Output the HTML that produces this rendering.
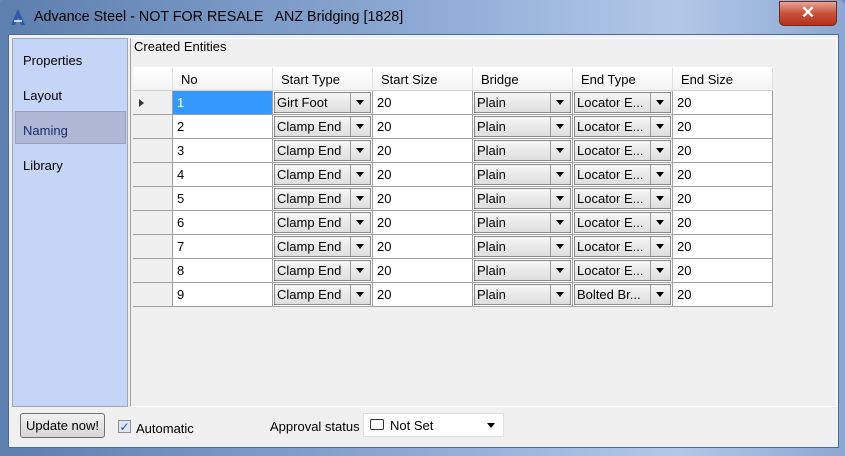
<!DOCTYPE html><html><head><style>
body{margin:0;width:845px;height:456px;overflow:hidden;font-family:"Liberation Sans",sans-serif;font-size:13px;background:#6c87b5}
.win{position:absolute;left:0;top:0;width:845px;height:456px;background:linear-gradient(90deg,#5d7fae 0%,#8eaad4 50%,#b2c8e8 80%,#8ba7d0 100%);border-radius:6px 6px 0 0}
.title{position:absolute;left:34px;top:9px;font-size:14.3px;color:#000}
.close{position:absolute;left:779px;top:1px;width:56px;height:23px;border-radius:0 0 5px 5px;background:linear-gradient(#e8a595,#c8513a 50%,#b7301c);border:1px solid #6b2a22;color:#fff;font-size:17px;font-weight:bold;text-align:center;line-height:22px}
.client{position:absolute;left:8px;top:34px;width:829px;height:412px;background:#f0f0f0;border:1px solid #4e6a95}
.left{position:absolute;left:3px;top:3px;width:114px;height:367px;background:#c5d5f8;border:1px solid #a0a8b8}
.left div{position:absolute;left:10px}
.sel{position:absolute;left:2px;top:72px;width:109px;height:31px;background:#aeb9d8;border:1px solid #98a3bf}
.main{position:absolute;left:121px;top:3px;width:705px;height:367px;background:#f0f0f0;border:1px solid #fff;border-left:1px solid #a0a0a0}
.grid{position:absolute;left:133px;top:68px}
.c{position:absolute;height:23px;border-right:1px solid #a0a0a0;border-bottom:1px solid #a0a0a0;background:#fff;line-height:23px;padding-left:4px;box-sizing:border-box}
.h{background:linear-gradient(#fff,#f3f3f3);border-right:1px solid #e0e0e0;border-bottom:1px solid #d0d0d0;padding-left:8px}
.cb{position:absolute;height:21px;top:1px;left:1px;right:1px;background:linear-gradient(#f6f6f6,#dedede);border:1px solid #8a8a8a;box-sizing:border-box;line-height:19px;padding-left:2px}
.ar{position:absolute;right:0;top:0;width:19px;height:19px;border-left:1px solid #9a9a9a}
.ar:after{content:"";position:absolute;left:5px;top:7px;border:4px solid transparent;border-top:5px solid #000;border-bottom:0}
</style></head><body><div class="win">
<svg style="position:absolute;left:10px;top:8px" width="16" height="18"><path d="M1 17 L8 1 L15 17 L11 17 L8 9 L5 17Z" fill="#2b5aa8"/><path d="M4 13 H12" stroke="#fff" stroke-width="1.5"/></svg>
<div class="title">Advance Steel - NOT FOR RESALE &nbsp; ANZ Bridging [1828]</div>
<div class="close">✕</div>
<div class="client">
<div class="left"><span class="sel"></span><div style="top:14px">Properties</div><div style="top:49px">Layout</div><div style="top:84px;color:#1a2a66">Naming</div><div style="top:119px">Library</div></div>
<div class="main"><div style="position:absolute;left:3px;top:0px">Created Entities</div></div>
<div style="position:absolute;left:11px;top:378px;width:85px;height:25px;border:1px solid #707070;border-radius:3px;background:linear-gradient(#f2f2f2,#d6d6d6);box-sizing:border-box;text-align:center;line-height:23px">Update now!</div>
<div style="position:absolute;left:109px;top:385px;width:13px;height:13px;border:1px solid #8e8f8f;background:#dde6f2;color:#2a4f9e;font-size:12px;line-height:12px;text-align:center;box-sizing:border-box">✓</div>
<div style="position:absolute;left:127px;top:386px">Automatic</div>
<div style="position:absolute;left:261px;top:384px">Approval status</div>
<div style="position:absolute;left:354px;top:378px;width:141px;height:24px;background:#fff;border:1px solid #e0e0e0;box-sizing:border-box"><span style="position:absolute;left:6px;top:5px;width:12px;height:9px;border:1px solid #333;border-radius:2px"></span><span style="position:absolute;left:26px;top:4px">Not Set</span><span style="position:absolute;right:8px;top:9px;border:4px solid transparent;border-top:5px solid #000;border-bottom:0"></span></div>
</div></div>
<div style="position:absolute;left:133px;top:67px;width:640px;height:240px;background:#fff"></div>
<div class="grid" id="g"></div>
<script>
var g=document.getElementById('g'),x=[0,40,140,240,340,440,540,640],h=['','No','Start Type','Start Size','Bridge','End Type','End Size'],s='';
for(var i=0;i<7;i++)s+='<div class="c h" style="left:'+x[i]+'px;top:0;width:'+(x[i+1]-x[i])+'px">'+h[i]+'</div>';
for(var r=0;r<9;r++){var t=23+r*24;var v=[r==0?'<span style="position:absolute;left:6px;top:8px;border:4px solid transparent;border-left:5px solid #333;border-right:0"></span>':'',(r+1),r==0?'Girt Foot':'Clamp End','20','Plain',r==8?'Bolted Br...':'Locator E...','20'];
for(var i=0;i<7;i++){var st='left:'+x[i]+'px;top:'+t+'px;width:'+(x[i+1]-x[i])+'px;height:24px';var c=v[i];
if(i==0)st+=';background:#f0f0f0;border-right:1px solid #a0a0a0';
if(i==1&&r==0)st+=';background:#3399ff;color:#fff';
if(i==2||i==4||i==5)c='<div class="cb">'+v[i]+'<div class="ar"></div></div>';
s+='<div class="c" style="'+st+'">'+c+'</div>';}}
g.innerHTML=s;
</script></body></html>
